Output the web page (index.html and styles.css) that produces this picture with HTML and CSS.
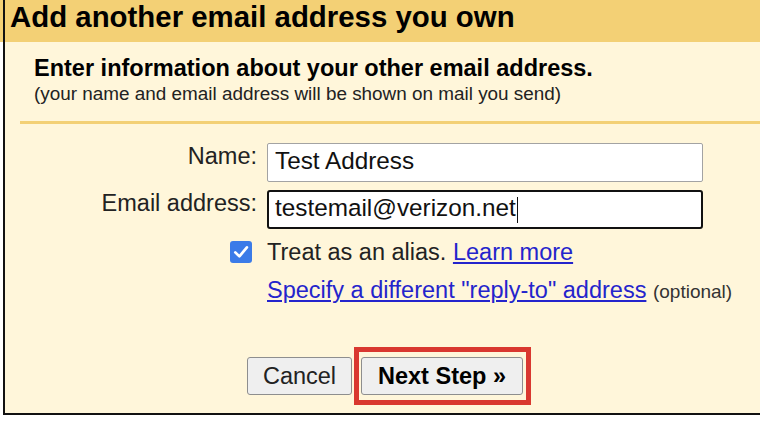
FILE: index.html
```html
<!DOCTYPE html>
<html lang="en">
<head>
<meta charset="utf-8">
<title>Add another email address you own</title>
<link rel="stylesheet" href="styles.css">
</head>
<body>
<div class="dialog">
  <div class="header"><h1 class="title">Add another email address you own</h1></div>
  <div class="intro">
    <div class="intro-head">Enter information about your other email address.</div>
    <div class="intro-note">(your name and email address will be shown on mail you send)</div>
  </div>
  <div class="sep"></div>
  <form class="form">
    <label class="lbl" for="nm">Name:</label>
    <input class="inp" id="nm" type="text" value="Test Address">
    <label class="lbl lbl-2" for="em">Email address:</label>
    <div class="field lbl-2">
      <input class="inp inp-focus" id="em" type="text" value="testemail@verizon.net">
      <span class="caret"></span>
    </div>
    <div class="chk-cell">
      <span class="chk"><svg viewBox="0 0 22 22" width="22" height="22"><path d="M5.3 11.4 L9.4 15.4 L16.9 6.4" fill="none" stroke="#fff" stroke-width="2.7" stroke-linecap="round" stroke-linejoin="round"/></svg></span>
    </div>
    <div class="chk-text">Treat as an alias. <a href="#" class="lnk">Learn more</a></div>
    <div class="reply"><a href="#" class="lnk">Specify a different "reply-to" address</a> <span class="opt">(optional)</span></div>
  </form>
  <div class="buttons">
    <button type="button" class="btn btn-cancel">Cancel</button>
    <span class="highlight"><button type="button" class="btn btn-next">Next Step »</button></span>
  </div>
</div>
</body>
</html>
```
FILE: styles.css
```css
html, body {
  margin: 0;
  padding: 0;
}
body {
  width: 760px;
  height: 422px;
  background: linear-gradient(#f3d075 0 42px, #ffffff 42px);
  font-family: "Liberation Sans", Arial, sans-serif;
  color: #111;
  overflow: hidden;
}
.dialog {
  margin-left: 3px;
  height: 415px;
  box-sizing: border-box;
  border-left: 2px solid #111;
  border-bottom: 2px solid #111;
  background: #fff6da;
}
.header {
  height: 42px;
  box-sizing: border-box;
  background: #f3d075;
  padding-left: 5px;
}
.title {
  margin: 0;
  font-size: 29.4px;
  line-height: 34px;
  font-weight: bold;
  color: #000;
}
.intro {
  padding-left: 29px;
  padding-top: 13px;
}
.intro-head {
  font-size: 23.5px;
  line-height: 27px;
  font-weight: bold;
  color: #000;
}
.intro-note {
  margin-top: 1px;
  font-size: 18.9px;
  line-height: 22px;
  color: #222;
}
.sep {
  margin: 16px 0 0 15px;
  height: 3px;
  background: #f3d075;
}
.form {
  margin: 19px 0 0 0;
  display: grid;
  grid-template-columns: 252px 436px;
  column-gap: 10px;
  font-size: 23.5px;
}
.lbl {
  text-align: right;
  line-height: 26px;
  color: #222;
}
.lbl-2 {
  margin-top: 8px;
}
.inp {
  display: block;
  width: 436px;
  height: 39px;
  box-sizing: border-box;
  margin: 0;
  padding: 0 6px 4px 7px;
  border: 1px solid #a3a3a3;
  border-radius: 2px;
  background: #fff;
  font-family: "Liberation Sans", Arial, sans-serif;
  font-size: 24.3px;
  color: #111;
  outline: none;
}
.inp-focus {
  border: 2px solid #111;
  border-radius: 3px;
  padding-left: 6px;
}
.field {
  position: relative;
}
.caret {
  position: absolute;
  left: 250px;
  top: 7px;
  width: 1px;
  height: 26px;
  background: #111;
}
.chk-cell {
  margin-top: 10px;
  display: flex;
  justify-content: flex-end;
  align-items: center;
  padding-right: 5px;
}
.chk {
  width: 22px;
  height: 22px;
  border-radius: 3px;
  background: #3b7be8;
  display: block;
}
.chk svg {
  display: block;
}
.chk-text {
  margin-top: 10px;
  line-height: 26px;
  color: #222;
}
.reply {
  grid-column: 2;
  margin-top: 12px;
  line-height: 26px;
  white-space: nowrap;
}
.lnk {
  color: #2424cc;
  text-decoration: underline;
}
.opt {
  font-size: 19px;
  color: #333;
}
.buttons {
  margin-top: 42px;
  padding-left: 242px;
  display: flex;
  align-items: center;
}
.btn {
  height: 38px;
  box-sizing: border-box;
  margin: 0;
  padding: 0;
  border: 1px solid #8e8e8e;
  border-radius: 3px;
  background: #efefef;
  font-family: "Liberation Sans", Arial, sans-serif;
  font-size: 23.5px;
  color: #222;
  white-space: nowrap;
}
.btn-cancel {
  width: 105px;
  margin-right: 2px;
}
.highlight {
  display: inline-flex;
  border: 5px solid #d9382f;
  padding: 5px 3px 5px 2px;
}
.btn-next {
  width: 162px;
  font-weight: bold;
  color: #000;
}
```
